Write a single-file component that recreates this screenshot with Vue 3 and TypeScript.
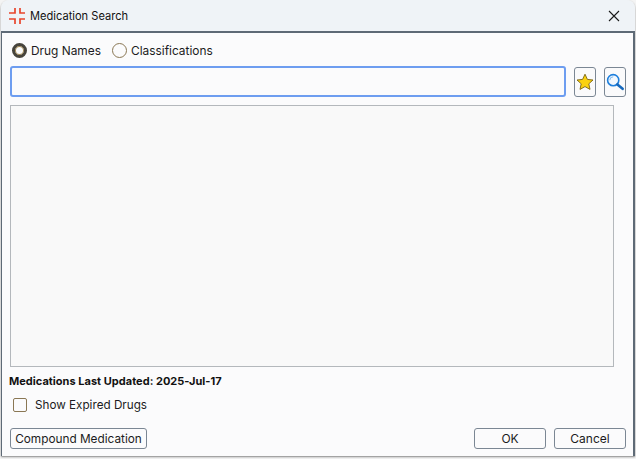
<script setup lang="ts">
import { ref } from 'vue'
const mode = ref<'names' | 'classes'>('names')
const expired = ref(false)
const query = ref('')
</script>

<template>
  <div class="page">
    <div class="window">
      <header class="titlebar">
        <svg class="logo" width="16" height="16" viewBox="0 0 16 16" fill="none" stroke="#e8452c" stroke-width="1.7">
          <path d="M6 0v5H0M11 0v5h5M0 11h6v5M16 11h-5v5" />
        </svg>
        <span class="title">Medication Search</span>
        <svg class="close" width="12" height="12" viewBox="0 0 12 12" stroke="#1a1a1a" stroke-width="1.1" fill="none">
          <path d="M1 1l10 10M11 1L1 11" />
        </svg>
      </header>
      <main class="body">
        <div class="radios">
          <label class="radio" @click="mode = 'names'">
            <span class="dot" :class="{ on: mode === 'names' }"></span>Drug Names
          </label>
          <label class="radio" @click="mode = 'classes'">
            <span class="dot" :class="{ on: mode === 'classes' }"></span>Classifications
          </label>
        </div>
        <div class="search">
          <input v-model="query" class="input" type="text" />
          <button class="icon-btn" type="button" aria-label="Favourites">
            <svg width="18" height="18" viewBox="0 0 18 18">
              <path d="M9 1.2l2.4 5.2 5.6.6-4.2 3.8 1.2 5.6L9 13.6l-5 2.8 1.2-5.6L1 7l5.6-.6z" fill="#fad20f" stroke="#7a6410" stroke-width=".9" stroke-linejoin="round" />
            </svg>
          </button>
          <button class="icon-btn" type="button" aria-label="Search">
            <svg width="18" height="18" viewBox="0 0 18 18" fill="none">
              <circle cx="7.2" cy="7.2" r="5.6" stroke="#1e7fdc" stroke-width="1.6" fill="#f2f8fe" />
              <path d="M3.8 7.2a3.4 3.4 0 0 1 3.4-3.4" stroke="#7db8ee" stroke-width="1" />
              <path d="M11.4 11.4l5.2 4.4" stroke="#1669bd" stroke-width="2.6" stroke-linecap="round" />
            </svg>
          </button>
        </div>
        <div class="results"></div>
        <p class="updated">Medications Last Updated: 2025-Jul-17</p>
        <label class="check" @click="expired = !expired">
          <span class="box" :class="{ on: expired }"></span>Show Expired Drugs
        </label>
        <footer class="actions">
          <button class="btn compound" type="button">Compound Medication</button>
          <span class="spacer"></span>
          <button class="btn action" type="button">OK</button>
          <button class="btn action" type="button">Cancel</button>
        </footer>
      </main>
    </div>
  </div>
</template>

<style>
html, body { margin: 0; background: #f4f4f4; }
</style>

<style scoped>
.page {
  width: 636px;
  height: 459px;
  overflow: hidden;
  padding: 0 1px 3px 1px;
  box-sizing: border-box;
  font-family: "Inter", "Noto Sans", sans-serif;
  font-size: 12px;
  color: #1b1b22;
}
.window {
  height: 100%;
  display: flex;
  flex-direction: column;
  border-radius: 8px 8px 0 0;
  box-shadow: 0 1px 2px rgba(0, 0, 0, 0.45);
  overflow: hidden;
}
.titlebar {
  flex: none;
  display: flex;
  align-items: center;
  padding: 1px 15px 0 8px;
  height: 30px;
  background: #eff3f7;
  border-bottom: 2px solid #5e6a76;
}
.logo { flex: none; }
.title { margin-left: 5px; font-size: 11.1px; color: #111; }
.close { margin-left: auto; }
.body {
  flex: 1;
  min-height: 0;
  display: flex;
  flex-direction: column;
  background: #fbfbfc;
  border-left: 1px solid #5e6a76;
  border-right: 2px solid #5e6a76;
  padding: 8px 7px 7px 8px;
}
.radios {
  display: flex;
  gap: 12px;
  height: 18px;
  margin-left: 2px;
  align-items: center;
}
.radio { display: flex; align-items: center; gap: 4px; font-size: 11.9px; }
.radio + .radio { margin-left: -1px; }
.dot {
  width: 15px;
  height: 15px;
  box-sizing: border-box;
  border-radius: 50%;
  border: 1px solid #8a7754;
  background: #fbfbfc;
}
.dot.on {
  border: 3px solid #47443c;
  box-shadow: inset 0 0 0 1px #a68b52;
}
.search {
  display: flex;
  align-items: center;
  gap: 8px;
  margin-top: 7px;
}
.input {
  flex: 1;
  min-width: 0;
  height: 31px;
  box-sizing: border-box;
  border: 2px solid #6d9df0;
  border-radius: 3px;
  background: #fbfbfc;
  outline: none;
}
.icon-btn {
  width: 22px;
  height: 30px;
  flex: none;
  padding: 0;
  display: flex;
  align-items: center;
  justify-content: center;
  background: #fafafb;
  border: 1px solid #7b8794;
  border-radius: 3px;
}
.results {
  flex: 1;
  min-height: 0;
  margin: 8px 12px 0 0;
  border: 1px solid #b4b8bc;
  background: #f9f9f9;
}
.updated {
  margin: 7px 0 0 -1px;
  height: 14px;
  line-height: 14px;
  font-size: 11px;
  font-weight: 700;
  letter-spacing: 0.02px;
  color: #111;
}
.check {
  display: flex;
  align-items: center;
  gap: 8px;
  height: 14px;
  margin: 10px 0 0 3px;
  font-size: 11.7px;
}
.box {
  width: 14px;
  height: 14px;
  box-sizing: border-box;
  border: 1.5px solid #8a7754;
  border-radius: 2px;
}
.actions {
  display: flex;
  gap: 8px;
  margin-top: 16px;
}
.spacer { flex: 1; }
.btn {
  height: 21px;
  padding: 0;
  font: inherit;
  color: inherit;
  background: #fbfbfc;
  border: 1px solid #7b8794;
  border-radius: 3px;
}
.compound { width: 137px; font-size: 11.8px; }
.action { width: 72px; }
</style>
